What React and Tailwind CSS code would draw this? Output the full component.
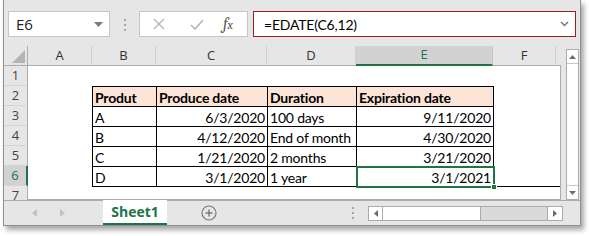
const cols = [
  { key: "A", w: 64 },
  { key: "B", w: 64 },
  { key: "C", w: 111 },
  { key: "D", w: 89 },
  { key: "E", w: 137 },
  { key: "F", w: 63 },
];

const rows = [
  ["Produt", "Produce date", "Duration", "Expiration date"],
  ["A", "6/3/2020", "100 days", "9/11/2020"],
  ["B", "4/12/2020", "End of month", "4/30/2020"],
  ["C", "1/21/2020", "2 months", "3/21/2020"],
  ["D", "3/1/2020", "1 year", "3/1/2021"],
];

const widths = [64, 111, 89, 137];

function Dots() {
  return (
    <div className="flex flex-col gap-[3px]">
      <span className="h-[2px] w-[2px] bg-[#a6a6a6]" />
      <span className="h-[2px] w-[2px] bg-[#a6a6a6]" />
      <span className="h-[2px] w-[2px] bg-[#a6a6a6]" />
    </div>
  );
}

function Toolbar() {
  return (
    <div className="flex h-[46px] items-start bg-[#e6e6e6] pl-[4px] pt-[11px]">
      <div className="flex h-[26px] w-[102px] items-center justify-between border border-[#c6c6c6] bg-white pl-[7px] pr-[6px] text-[15px] text-[#222]" style={{ fontFamily: "'Open Sans', sans-serif" }}>
        <span>E6</span>
        <svg width="9" height="5" viewBox="0 0 9 5">
          <polygon points="0,0 9,0 4.5,5" fill="#7a7a7a" />
        </svg>
      </div>
      <div className="ml-[14px] mt-[8px]">
        <Dots />
      </div>
      <div className="ml-[13px] flex h-[26px] w-[109px] items-center border border-[#c6c6c6] bg-white">
        <svg className="ml-[13px]" width="12" height="12" viewBox="0 0 12 12">
          <path d="M1 1 L11 11 M11 1 L1 11" stroke="#b4b4b4" strokeWidth="1.3" />
        </svg>
        <svg className="ml-[25px]" width="14" height="11" viewBox="0 0 14 11">
          <path d="M1 6 L5 10 L13 1" stroke="#b4b4b4" strokeWidth="1.6" fill="none" />
        </svg>
        <span className="ml-[19px] font-serif text-[16px] italic leading-none text-[#555]">
          f<span className="text-[12px]">x</span>
        </span>
      </div>
      <div className="ml-[5px] flex h-[26px] w-[323px] items-center justify-between border border-[#9a1d1d] bg-white pl-[10px] pr-[6px] text-[14px] tracking-[-0.2px] text-black" style={{ fontFamily: "Lato, sans-serif" }}>
        <span>=EDATE(C6,12)</span>
        <svg width="9" height="6" viewBox="0 0 9 6">
          <path d="M1 1 L4.5 4.5 L8 1" stroke="#777" strokeWidth="1.5" fill="none" />
        </svg>
      </div>
    </div>
  );
}

function ColumnHeader() {
  return (
    <div className="flex h-[20px] text-[13px] text-[#333]" style={{ fontFamily: "'Open Sans', sans-serif" }}>
      <div className="relative w-[24px] border-b border-r border-[#ababab]">
        <svg className="absolute bottom-[2px] right-[2px]" width="13" height="13" viewBox="0 0 13 13">
          <polygon points="13,0 13,13 0,13" fill="#b4b4b4" />
        </svg>
      </div>
      {cols.map((c) =>
        c.key === "E" ? (
          <div key={c.key} style={{ width: c.w }} className="flex items-center justify-center border-b-2 border-r border-b-[#217346] border-r-[#c6c6c6] bg-[#d2d2d2] text-[#217346]">
            {c.key}
          </div>
        ) : (
          <div key={c.key} style={{ width: c.w }} className="flex items-center justify-center border-b border-r border-b-[#ababab] border-r-[#d0d0d0]">
            {c.key}
          </div>
        )
      )}
      <div className="flex-1 border-b border-[#ababab]" />
    </div>
  );
}

function RowHeaders() {
  return (
    <div className="flex w-[24px] flex-col text-[13px] text-[#444]" style={{ fontFamily: "'Open Sans', sans-serif" }}>
      {[1, 2, 3, 4, 5].map((n) => (
        <div key={n} className="flex h-[20px] items-center justify-center border-b border-r border-b-[#d4d4d4] border-r-[#ababab]">
          {n}
        </div>
      ))}
      <div className="flex h-[20px] items-center justify-center border-b border-r-2 border-b-[#d4d4d4] border-r-[#217346] bg-[#d2d2d2] text-[#217346]">
        6
      </div>
      <div className="flex h-[14px] items-start justify-center overflow-hidden border-r border-[#ababab] pt-[1px] leading-[16px]">
        7
      </div>
    </div>
  );
}

function DataTable() {
  return (
    <div className="ml-[64px] mt-[20px] text-[14px] tracking-[-0.2px] text-black" style={{ fontFamily: "Lato, sans-serif" }}>
      {rows.map((r, i) => (
        <div key={i} className={`flex border-black ${i === rows.length - 1 ? "border-b" : ""}`}>
          {r.map((cell, j) => {
            const right = i > 0 && (j === 1 || j === 3);
            const last = j === r.length - 1;
            const selected = i === 4 && j === 3;
            return (
              <div
                key={j}
                style={{ width: widths[j] + (last ? 1 : 0) }}
                className={`relative h-[20px] whitespace-nowrap border-l border-t border-black px-[2px] pt-[1px] leading-[20px] ${last ? "border-r" : ""} ${right ? "text-right" : ""} ${i === 0 ? "bg-[#fce4d6] font-bold" : ""}`}
              >
                {cell}
                {selected && (
                  <div className="absolute -left-[1px] -top-[1px] h-[22px] w-[139px] border-2 border-[#217346]">
                    <span className="absolute -bottom-[4px] -right-[4px] h-[6px] w-[6px] border border-white bg-[#217346]" />
                  </div>
                )}
              </div>
            );
          })}
        </div>
      ))}
    </div>
  );
}

function VScroll() {
  return (
    <div className="ml-[5px] mt-[3px] flex h-[151px] w-[13px] flex-col border border-[#ababab] bg-white">
      <div className="flex h-[14px] items-center justify-center border-b border-[#c6c6c6]">
        <svg width="7" height="4" viewBox="0 0 7 4"><polygon points="0,4 7,4 3.5,0" fill="#6d6d6d" /></svg>
      </div>
      <div className="flex-1 border-b border-[#c6c6c6]" />
      <div className="flex h-[13px] items-center justify-center">
        <svg width="7" height="4" viewBox="0 0 7 4"><polygon points="0,0 7,0 3.5,4" fill="#6d6d6d" /></svg>
      </div>
    </div>
  );
}

function BottomBar() {
  return (
    <div className="flex h-[25px] bg-[#e6e6e6]">
      <div className="flex w-[99px] items-center border-t border-[#ababab]">
        <svg className="ml-[28px]" width="5" height="8" viewBox="0 0 5 8"><polygon points="5,0 5,8 0,4" fill="#c2c2c2" /></svg>
        <svg className="ml-[23px]" width="5" height="8" viewBox="0 0 5 8"><polygon points="0,0 0,8 5,4" fill="#c2c2c2" /></svg>
      </div>
      <div className="flex w-[64px] items-center justify-center border-b-2 border-[#217346] bg-white pb-[1px] text-[14px] font-bold text-[#217346]" style={{ fontFamily: "'Open Sans', sans-serif" }}>
        Sheet1
      </div>
      <div className="flex flex-1 items-center border-t border-[#ababab]">
        <svg className="ml-[34px]" width="16" height="16" viewBox="0 0 16 16">
          <circle cx="8" cy="8" r="7" stroke="#7a7a7a" strokeWidth="1.2" fill="none" />
          <path d="M8 4.5 V11.5 M4.5 8 H11.5" stroke="#7a7a7a" strokeWidth="1.4" />
        </svg>
        <div className="ml-[135px]">
          <Dots />
        </div>
        <div className="ml-[14px] flex h-[15px] w-[195px] border border-[#ababab] bg-[#dadada]">
          <div className="flex w-[14px] items-center justify-center border-r border-[#ababab] bg-white">
            <svg width="4" height="7" viewBox="0 0 4 7"><polygon points="4,0 4,7 0,3.5" fill="#6d6d6d" /></svg>
          </div>
          <div className="w-[98px] border-r border-[#ababab] bg-white" />
          <div className="flex-1" />
          <div className="flex w-[15px] items-center justify-center border-l border-[#ababab] bg-white">
            <svg width="4" height="7" viewBox="0 0 4 7"><polygon points="0,0 0,7 4,3.5" fill="#6d6d6d" /></svg>
          </div>
        </div>
      </div>
    </div>
  );
}

export default function App() {
  return (
    <div className="h-[236px] w-[589px] overflow-hidden bg-white">
      <div className="ml-[3px] h-[226px] w-[578px] border-x border-b border-[#8f8f8f] bg-[#e6e6e6] shadow-[3px_4px_5px_rgba(0,0,0,0.35)]">
        <Toolbar />
        <div className="flex">
          <div className="w-[557px]">
            <ColumnHeader />
            <div className="flex h-[134px]">
              <RowHeaders />
              <div className="flex-1 border-b border-r border-[#ababab] bg-white">
                <DataTable />
              </div>
            </div>
          </div>
          <VScroll />
        </div>
        <BottomBar />
      </div>
    </div>
  );
}
